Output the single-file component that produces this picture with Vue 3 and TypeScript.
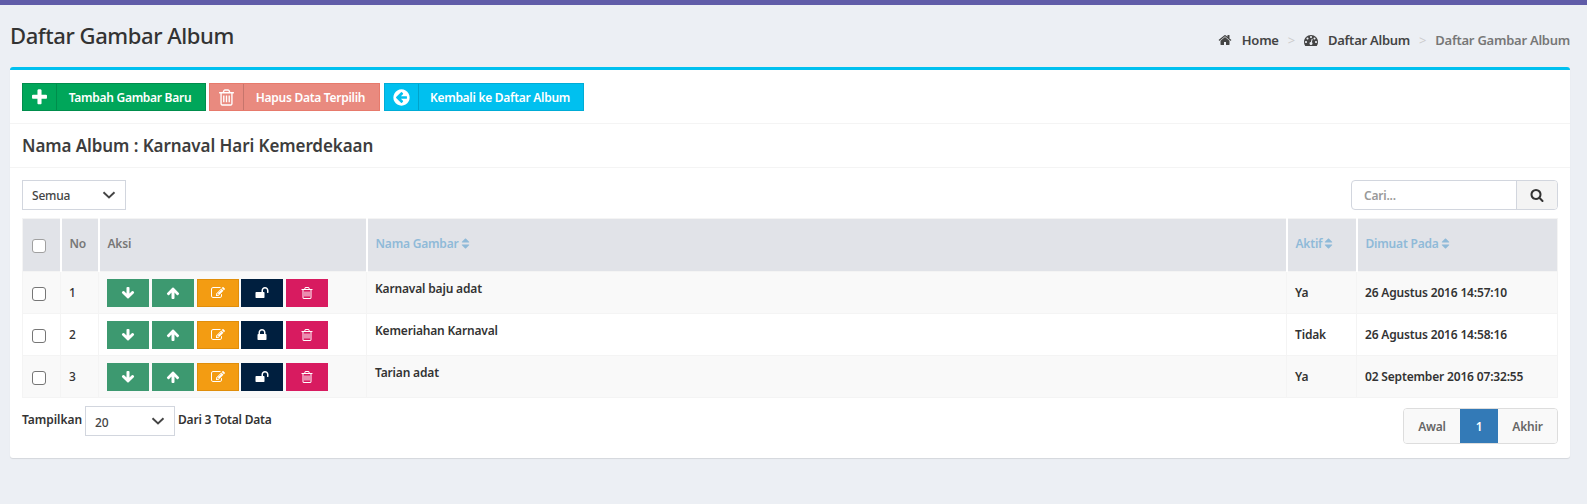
<script setup lang="ts">
const icons: Record<string, string> = {
  plus: 'M1600 736v192q0 40-28 68t-68 28h-416v416q0 40-28 68t-68 28h-192q-40 0-68-28t-28-68v-416h-416q-40 0-68-28t-28-68v-192q0-40 28-68t68-28h416v-416q0-40 28-68t68-28h192q40 0 68 28t28 68v416h416q40 0 68 28t28 68z',
  down: 'M1675 832q0 53-37 90l-651 652q-39 37-91 37-53 0-90-37l-651-652q-38-36-38-90 0-53 38-91l74-75q39-37 91-37 53 0 90 37l294 294v-704q0-52 38-90t90-38h128q52 0 90 38t38 90v704l294-294q37-37 90-37 52 0 91 37l75 75q37 39 37 91z',
  up: 'M1675 971q0 51-37 90l-75 75q-38 38-91 38-54 0-90-38l-294-293v704q0 52-37.500 84.500t-90.500 32.500h-128q-53 0-90.500-32.500t-37.500-84.500v-704l-294 293q-36 38-90 38t-90-38l-75-75q-38-38-38-90 0-53 38-91l651-651q35-37 90-37 54 0 91 37l651 651q37 39 37 91z',
  search: 'M1216 832q0-185-131.500-316.500t-316.500-131.500-316.500 131.500-131.500 316.500 131.500 316.500 316.500 131.500 316.500-131.500 131.500-316.500zm512 832q0 52-38 90t-90 38q-54 0-90-38l-343-342q-179 124-399 124-143 0-273.500-55.500t-225-150-150-225-55.500-273.500 55.500-273.500 150-225 225-150 273.500-55.500 273.500 55.500 225 150 150 225 55.500 273.500q0 220-124 399l343 343q37 37 37 90z',
  lock: 'M640 768h512v-192q0-106-75-181t-181-75-181 75-75 181v192zm832 96v576q0 40-28 68t-68 28h-960q-40 0-68-28t-28-68v-576q0-40 28-68t68-28h32v-192q0-184 132-316t316-132 316 132 132 316v192h32q40 0 68 28t28 68z',
  unlock: 'M1728 576v256q0 26-19 45t-45 19h-64q-26 0-45-19t-19-45v-256q0-106-75-181t-181-75-181 75-75 181v192h96q40 0 68 28t28 68v576q0 40-28 68t-68 28h-960q-40 0-68-28t-28-68v-576q0-40 28-68t68-28h672v-192q0-185 131.500-316.500t316.500-131.500 316.500 131.500 131.500 316.500z',
  trash: 'M704 736v576q0 14-9 23t-23 9h-64q-14 0-23-9t-9-23v-576q0-14 9-23t23-9h64q14 0 23 9t9 23zm256 0v576q0 14-9 23t-23 9h-64q-14 0-23-9t-9-23v-576q0-14 9-23t23-9h64q14 0 23 9t9 23zm256 0v576q0 14-9 23t-23 9h-64q-14 0-23-9t-9-23v-576q0-14 9-23t23-9h64q14 0 23 9t9 23zm128 724v-948h-896v948q0 22 7 40.500t14.500 27 10.500 8.500h832q3 0 10.500-8.500t14.500-27 7-40.500zm-672-1076h448l-48-117q-7-9-17-11h-317q-10 2-17 11zm928 32v64q0 14-9 23t-23 9h-96v948q0 83-47 143.500t-113 60.500h-832q-66 0-113-58.500t-47-141.500v-952h-96q-14 0-23-9t-9-23v-64q0-14 9-23t23-9h309l70-167q15-37 54-63t79-26h320q40 0 79 26t54 63l70 167h309q14 0 23 9t9 23z',
  back: 'M1408 960v-128q0-26-19-45t-45-19h-502l189-189q19-19 19-45t-19-45l-91-91q-18-18-45-18t-45 18l-362 362-91 91q-18 18-18 45t18 45l91 91 362 362q18 18 45 18t45-18l91-91q18-18 18-45t-18-45l-189-189h502q26 0 45-19t19-45zm256-64q0 209-103 385.500t-279.500 279.500-385.500 103-385.500-103-279.500-279.500-103-385.500 103-385.500 279.500-279.500 385.500-103 385.500 103 279.500 279.500 103 385.500z',
  home: 'M1472 992v480q0 26-19 45t-45 19h-384v-384h-256v384h-384q-26 0-45-19t-19-45v-480q0-1 .5-3t.5-3l575-474 575 474q1 2 1 6zm223-69l-62 74q-8 9-21 11h-3q-13 0-21-7l-692-577-692 577q-12 8-24 7-13-2-21-11l-62-74q-8-10-7-23.500t11-21.500l719-599q32-26 76-26t76 26l244 204v-195q0-14 9-23t23-9h192q14 0 23 9t9 23v408l219 182q10 8 11 21.500t-7 23.500z',
  gauge: 'M384 1152q0-53-37.500-90.500t-90.500-37.500-90.500 37.500-37.500 90.500 37.500 90.500 90.500 37.500 90.500-37.500 37.500-90.500zm192-448q0-53-37.500-90.500t-90.500-37.500-90.500 37.500-37.500 90.500 37.500 90.500 90.500 37.500 90.500-37.500 37.500-90.500zm428 481l101-382q6-26-7.500-48.500t-38.500-29.500-48 6.500-30 39.500l-101 382q-60 5-107 43.500t-63 98.500q-20 77 20 146t117 89 146-20 89-117q16-60-6-117t-72-91zm660-33q0-53-37.500-90.500t-90.500-37.500-90.500 37.500-37.500 90.500 37.500 90.500 90.500 37.500 90.500-37.500 37.500-90.500zm-640-640q0-53-37.500-90.500t-90.500-37.500-90.500 37.500-37.500 90.500 37.500 90.500 90.500 37.500 90.500-37.500 37.500-90.500zm448 192q0-53-37.500-90.500t-90.500-37.500-90.500 37.500-37.500 90.500 37.500 90.500 90.500 37.500 90.500-37.500 37.500-90.500zm320 448q0 261-141 483-19 29-54 29h-1402q-35 0-54-29-141-221-141-483 0-182 71-348t191-286 286-191 348-71 348 71 286 191 191 286 71 348z',
  edit: 'M888 1184l116-116-152-152-116 116v56h96v96h56zm440-720q-16-16-33 1l-350 350q-17 17-1 33t33-1l350-350q17-17 1-33zm80 594v190q0 119-84.500 203.500t-203.500 84.500h-832q-119 0-203.500-84.500t-84.500-203.500v-832q0-119 84.500-203.500t203.500-84.500h832q63 0 117 25 15 7 18 23 3 17-9 29l-49 49q-14 14-32 8-23-6-45-6h-832q-66 0-113 47t-47 113v832q0 66 47 113t113 47h832q66 0 113-47t47-113v-126q0-13 9-22l64-64q15-15 35-7t20 29zm-96-738l288 288-672 672h-288v-288zm444 132l-92 92-288-288 92-92q28-28 68-28t68 28l152 152q28 28 28 68t-28 68z',
  sort: 'M1408 1088q0 26-19 45l-448 448q-19 19-45 19t-45-19l-448-448q-19-19-19-45t19-45 45-19h896q26 0 45 19t19 45zm0-384q0 26-19 45t-45 19h-896q-26 0-45-19t-19-45 19-45l448-448q19-19 45-19t45 19l448 448q19 19 19 45z',
}

const toolbar = [
  { label: 'Tambah Gambar Baru', icon: 'plus', cls: 'tb-green' },
  { label: 'Hapus Data Terpilih', icon: 'trash', cls: 'tb-red' },
  { label: 'Kembali ke Daftar Album', icon: 'back', cls: 'tb-cyan' },
]

const rows = [
  { no: 1, name: 'Karnaval baju adat', aktif: 'Ya', date: '26 Agustus 2016 14:57:10', lock: 'unlock' },
  { no: 2, name: 'Kemeriahan Karnaval', aktif: 'Tidak', date: '26 Agustus 2016 14:58:16', lock: 'lock' },
  { no: 3, name: 'Tarian adat', aktif: 'Ya', date: '02 September 2016 07:32:55', lock: 'unlock' },
]
</script>

<template>
  <div class="page">
    <div class="topbar"></div>
    <header class="head">
      <h1>Daftar Gambar Album</h1>
      <nav class="crumbs">
        <a><svg class="i" viewBox="0 0 1792 1792"><path :d="icons.home" /></svg>Home</a>
        <span class="sep">&gt;</span>
        <a><svg class="i" viewBox="0 0 1792 1792"><path :d="icons.gauge" /></svg>Daftar Album</a>
        <span class="sep">&gt;</span>
        <span class="cur">Daftar Gambar Album</span>
      </nav>
    </header>

    <section class="card">
      <div class="toolbar">
        <button v-for="b in toolbar" :key="b.label" class="tb" :class="b.cls">
          <span class="tb-icon"><svg viewBox="0 0 1792 1792"><path :d="icons[b.icon]" /></svg></span>
          <span class="tb-label">{{ b.label }}</span>
        </button>
      </div>

      <h2 class="album">Nama Album : Karnaval Hari Kemerdekaan</h2>

      <div class="body">
        <div class="filters">
          <div class="select sel-all">
            <span>Semua</span>
            <svg class="chev" viewBox="0 0 14 8"><path d="M1.5 1.2 7 6.5l5.5-5.300" /></svg>
          </div>
          <div class="search">
            <span class="placeholder">Cari...</span>
            <span class="addon"><svg viewBox="0 0 1792 1792"><path :d="icons.search" /></svg></span>
          </div>
        </div>

        <table class="grid">
          <colgroup>
            <col class="c1" /><col class="c2" /><col class="c3" /><col /><col class="c5" /><col class="c6" />
          </colgroup>
          <thead>
            <tr>
              <th><span class="check"></span></th>
              <th>No</th>
              <th>Aksi</th>
              <th><a class="sortable">Nama Gambar<svg viewBox="0 0 1792 1792"><path :d="icons.sort" /></svg></a></th>
              <th><a class="sortable">Aktif<svg viewBox="0 0 1792 1792"><path :d="icons.sort" /></svg></a></th>
              <th><a class="sortable">Dimuat Pada<svg viewBox="0 0 1792 1792"><path :d="icons.sort" /></svg></a></th>
            </tr>
          </thead>
          <tbody>
            <tr v-for="r in rows" :key="r.no">
              <td><span class="check"></span></td>
              <td>{{ r.no }}</td>
              <td>
                <div class="actions">
                  <button class="act a-green"><svg viewBox="0 0 1792 1792"><path :d="icons.down" /></svg></button>
                  <button class="act a-green"><svg viewBox="0 0 1792 1792"><path :d="icons.up" /></svg></button>
                  <button class="act a-orange"><svg viewBox="0 0 1792 1792"><path :d="icons.edit" /></svg></button>
                  <button class="act a-navy"><svg viewBox="0 0 1792 1792"><path :d="icons[r.lock]" /></svg></button>
                  <button class="act a-maroon"><svg viewBox="0 0 1792 1792"><path :d="icons.trash" /></svg></button>
                </div>
              </td>
              <td class="top">{{ r.name }}</td>
              <td>{{ r.aktif }}</td>
              <td>{{ r.date }}</td>
            </tr>
          </tbody>
        </table>

        <div class="foot">
          <div class="foot-left">
            <span class="tamp">Tampilkan</span>
            <div class="select sel-num">
              <span>20</span>
              <svg class="chev" viewBox="0 0 14 8"><path d="M1.5 1.2 7 6.5l5.5-5.300" /></svg>
            </div>
            <span>Dari 3 Total Data</span>
          </div>
          <div class="pager">
            <a class="p-awal">Awal</a>
            <a class="p-on">1</a>
            <a class="p-akhir">Akhir</a>
          </div>
        </div>
      </div>
    </section>
  </div>
</template>

<style>
html, body { margin: 0; background: #eceff4; }
</style>

<style scoped>
.page {
  height: 504px;
  box-sizing: border-box;
  background: #eceff4;
  font-family: "Noto Sans", "Liberation Sans", sans-serif;
  font-weight: 600;
  font-size: 12px;
  letter-spacing: -0.2px;
  color: #333;
  overflow: hidden;
}
.topbar { height: 5px; background: #605ca8; }
.head {
  height: 62px;
  box-sizing: border-box;
  padding: 0 17px 0 10px;
  display: flex;
  justify-content: space-between;
}
h1 {
  margin: 16px 0 0;
  font-size: 22px;
  line-height: 29px;
  font-weight: 500;
  letter-spacing: -0.42px;
  color: #333;
}
.crumbs {
  display: flex;
  align-items: center;
  height: 20px;
  margin-top: 25px;
  font-size: 13px;
  letter-spacing: -0.25px;
  color: #444;
}
.crumbs a { display: flex; align-items: center; }
.crumbs .i { width: 14px; height: 14px; fill: #444; margin-right: 10px; }
.sep { color: #ccc; margin: 0 9px; font-weight: 400; }
.cur { color: #777; }

.card {
  margin: 0 17px 0 10px;
  height: 391px;
  box-sizing: border-box;
  background: #fff;
  border-top: 3px solid #00c0ef;
  border-radius: 3px;
  box-shadow: 0 1px 1px rgba(0, 0, 0, 0.1);
}
.toolbar {
  display: flex;
  gap: 3px;
  padding: 13px 12px 12px;
  border-bottom: 1px solid #f4f4f4;
}
.tb {
  display: flex;
  align-items: stretch;
  height: 28px;
  padding: 0;
  border: 1px solid;
  font: inherit;
  letter-spacing: -0.28px;
  color: #fff;
  box-sizing: border-box;
}
.tb + .tb + .tb { margin-left: 1px; }
.tb-icon {
  width: 34px;
  box-sizing: border-box;
  display: flex;
  align-items: center;
  justify-content: center;
  border-right: 1px solid rgba(0, 0, 0, 0.15);
}
.tb-icon svg { width: 19px; height: 19px; fill: #fff; }
.tb-label { display: flex; align-items: center; justify-content: center; flex: 1; padding-right: 2px; }
.tb-green { width: 184px; background: #00a65a; border-color: #008d4c; }
.tb-red { width: 171px; background: #e98a7f; border-color: #e77a6c; }
.tb-cyan { width: 200px; background: #00c0ef; border-color: #00acd6; }

.album {
  margin: 0;
  height: 44px;
  box-sizing: border-box;
  padding-left: 12px;
  display: flex;
  align-items: center;
  font-size: 17px;
  font-weight: 600;
  letter-spacing: -0.08px;
  color: #3d3d3d;
  border-bottom: 1px solid #f4f4f4;
}
.body { padding: 12px 12px 0; }
.filters { display: flex; justify-content: space-between; margin-bottom: 8px; }
.select {
  display: flex;
  align-items: center;
  justify-content: space-between;
  box-sizing: border-box;
  height: 30px;
  padding: 0 9px;
  background: #fff;
  border: 1px solid #d2d6de;
  color: #444;
  font-weight: 500;
}
.sel-all { width: 104px; }
.sel-num { width: 90px; margin: 0 3px; }
.sel-num span { margin-top: 2px; }
.chev { width: 14px; height: 8px; fill: none; stroke: #444; stroke-width: 1.900; }
.search {
  display: flex;
  width: 207px;
  height: 30px;
  box-sizing: border-box;
  border: 1px solid #d2d6de;
  border-radius: 4px;
  overflow: hidden;
}
.placeholder { flex: 1; padding: 1px 0 0 12px; line-height: 28px; color: #999; }
.addon {
  width: 40px;
  display: flex;
  align-items: center;
  justify-content: center;
  background: #f4f4f4;
  border-left: 1px solid #d2d6de;
}
.addon svg { width: 14px; height: 14px; fill: #333; }

.grid {
  width: 1536px;
  table-layout: fixed;
  border-collapse: collapse;
  border: 1px solid #f4f4f4;
}
.c1, .c2 { width: 38px; }
.c3 { width: 268px; }
.c5 { width: 70px; }
.c6 { width: 201px; }
th {
  height: 53px;
  box-sizing: border-box;
  padding: 0 8px 3px;
  text-align: left;
  background: #e1e3e8;
  color: #777;
  border-left: 2px solid #fff;
  font-weight: 600;
}
th:first-child, td:first-child { border-left: 0; padding: 2px 0 0 9px; text-align: left; }
td {
  height: 42px;
  box-sizing: border-box;
  padding: 0 8px;
  border: 1px solid #f4f4f4;
  color: #333;
  letter-spacing: -0.17px;
}
td:nth-child(2) { font-weight: 500; }
td.top { vertical-align: top; padding-top: 7px; line-height: 20px; }
tbody tr:nth-child(odd) td { background: #f9f9f9; }
.sortable { color: #8fbad8; display: inline-flex; align-items: center; }
.sortable svg { width: 13px; height: 13px; fill: #8fbad8; }
.check {
  display: block;
  width: 14px;
  height: 14px;
  box-sizing: border-box;
  background: #fff;
  border: 1px solid #767676;
  border-radius: 3px;
}
th .check { border-color: #a0a0a0; }
.actions { display: flex; gap: 3px; }
.act {
  display: flex;
  align-items: center;
  justify-content: center;
  width: 42px;
  height: 28px;
  padding: 0;
  border: 1px solid;
  box-sizing: border-box;
}
.act svg { width: 14px; height: 14px; fill: #fff; }
.a-green { background: #3d9970; border-color: #3d9970; }
.a-orange { background: #f39c12; border-color: #e08e0b; }
.a-navy { background: #001f3f; border-color: #001f3f; margin-left: -1px; }
.a-maroon { background: #d81b60; border-color: #d81b60; }

.foot { display: flex; justify-content: space-between; margin-top: 8px; }
.foot-left { display: flex; align-items: flex-start; }
.foot-left > span { line-height: 28px; }
.tamp { letter-spacing: -0.05px; }
.pager {
  display: flex;
  height: 36px;
  margin-top: 2px;
  box-sizing: border-box;
  border: 1px solid #ddd;
  border-radius: 4px;
  overflow: hidden;
  color: #666;
}
.pager a { display: flex; align-items: center; justify-content: center; background: #f9f9f9; }
.p-awal { width: 56px; }
.p-on { width: 38px; background: #337ab7 !important; color: #fff; }
.p-akhir { width: 59px; }
</style>
